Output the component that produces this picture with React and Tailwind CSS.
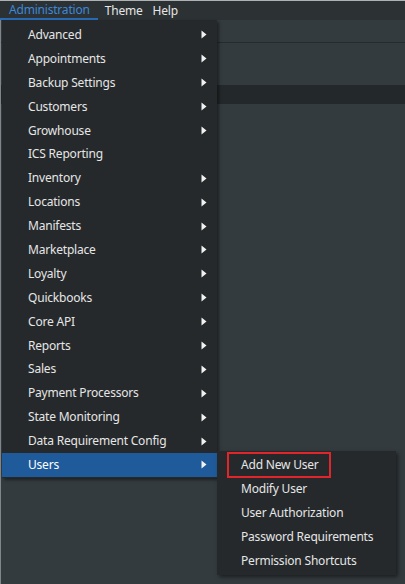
import React from 'react';

const ITEMS = [
  { label: 'Advanced', sub: true },
  { label: 'Appointments', sub: true },
  { label: 'Backup Settings', sub: true },
  { label: 'Customers', sub: true },
  { label: 'Growhouse', sub: true },
  { label: 'ICS Reporting', sub: false },
  { label: 'Inventory', sub: true },
  { label: 'Locations', sub: true },
  { label: 'Manifests', sub: true },
  { label: 'Marketplace', sub: true },
  { label: 'Loyalty', sub: true },
  { label: 'Quickbooks', sub: true },
  { label: 'Core API', sub: true },
  { label: 'Reports', sub: true },
  { label: 'Sales', sub: true },
  { label: 'Payment Processors', sub: true },
  { label: 'State Monitoring', sub: true },
  { label: 'Data Requirement Config', sub: true },
  { label: 'Users', sub: true, active: true },
];

const USER_ITEMS = [
  'Add New User',
  'Modify User',
  'User Authorization',
  'Password Requirements',
  'Permission Shortcuts',
];

function Arrow() {
  return (
    <svg width="6" height="9" viewBox="0 0 6 9" className="shrink-0">
      <path d="M0.5 0.5 L5.5 4.5 L0.5 8.5 Z" fill="#f2f2f2" />
    </svg>
  );
}

export default function App() {
  return (
    <div
      className="relative w-[405px] h-[584px] overflow-hidden bg-[#343b3e] text-[12px] tracking-[-0.2px] text-[#e6e6e6]"
      style={{ fontFamily: '"Noto Sans", "Open Sans", sans-serif' }}
    >
      {/* menu bar */}
      <div className="flex h-[20px] items-center bg-[#2c3134] border-t border-[#aeb2b4]">
        <div className="h-full pl-[9px] pr-[8px] flex items-center text-[#3d88d6] border-b-2 border-[#2a6bb5]">
          Administration
        </div>
        <div className="pl-[7px] pr-[4px] flex items-center">Theme</div>
        <div className="px-[6px] flex items-center">Help</div>
      </div>

      {/* page behind */}
      <div className="flex flex-col h-[564px] border-l border-[#80868a]">
        <div className="h-[23px] border-b border-[#262b2e]"></div>
        <div className="h-[42px]"></div>
        <div className="h-[19px] bg-[#23282b]"></div>
        <div className="flex-1"></div>
      </div>

      {/* administration dropdown */}
      <div className="absolute left-[2px] top-[20px] w-[215px] bg-[#25292c] pt-[3px] pb-[1px] shadow-[2px_2px_3px_rgba(0,0,0,0.45)]">
        {ITEMS.map((item) => (
          <div
            key={item.label}
            className={`flex items-center justify-between h-[23.9px] pl-[26px] pr-[10px] ${
              item.active ? 'bg-[#1f5b9b] text-white' : ''
            }`}
          >
            <span>{item.label}</span>
            {item.sub && <Arrow />}
          </div>
        ))}
      </div>

      {/* users submenu */}
      <div className="absolute left-[217px] top-[451px] w-[179px] bg-[#25292c] pt-[2px] pb-[2px] shadow-[2px_2px_4px_rgba(0,0,0,0.5)]">
        {USER_ITEMS.map((label, i) => (
          <div key={label} className="flex items-center h-[24px] pl-[24px] relative">
            <span>{label}</span>
            {i === 0 && (
              <div className="absolute left-[10px] top-[-1px] w-[104px] h-[26px] border-2 border-[#e0252b]"></div>
            )}
          </div>
        ))}
      </div>
    </div>
  );
}
